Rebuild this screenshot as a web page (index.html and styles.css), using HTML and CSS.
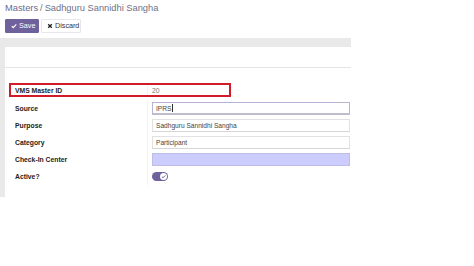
FILE: index.html
```html
<!DOCTYPE html>
<html>
<head>
<meta charset="utf-8">
<link rel="stylesheet" href="styles.css">
</head>
<body>
<div class="control">
  <div class="crumbs"><span class="crumb-link">Masters</span><span class="sep">/</span><span class="crumb-cur">Sadhguru Sannidhi Sangha</span></div>
  <div class="buttons">
    <button class="btn btn-primary"><svg class="ico" viewBox="0 0 10 10"><path d="M1.2 5.2 L3.8 7.6 L8.8 2.4" fill="none" stroke="#fff" stroke-width="2"/></svg>Save</button>
    <button class="btn btn-secondary"><svg class="ico" viewBox="0 0 10 10"><path d="M2 2 L8 8 M8 2 L2 8" fill="none" stroke="#222" stroke-width="2.2"/></svg>Discard</button>
  </div>
</div>
<div class="content">
  <div class="sheet">
    <div class="sheet-head"></div>
    <div class="form">
      <div class="row row-id">
        <div class="label">VMS Master ID</div>
        <div class="value"><span class="plain">20</span></div>
        <div class="highlight"></div>
      </div>
      <div class="row">
        <div class="label">Source</div>
        <div class="value"><div class="input focused">IPRS<span class="caret"></span></div></div>
      </div>
      <div class="row">
        <div class="label">Purpose</div>
        <div class="value"><div class="input">Sadhguru Sannidhi Sangha</div></div>
      </div>
      <div class="row">
        <div class="label">Category</div>
        <div class="value"><div class="input">Participant</div></div>
      </div>
      <div class="row">
        <div class="label">Check-In Center</div>
        <div class="value"><div class="input required"></div></div>
      </div>
      <div class="row">
        <div class="label">Active?</div>
        <div class="value"><div class="toggle"><div class="knob"><svg viewBox="0 0 10 10"><path d="M2.6 5.2 L4.4 6.9 L7.6 3.4" fill="none" stroke="#71639e" stroke-width="1.4"/></svg></div></div></div>
      </div>
    </div>
  </div>
</div>
</body>
</html>
```
FILE: styles.css
```css
* { box-sizing: border-box; }
html, body { margin: 0; padding: 0; background: #fff; }
body { font-family: "Liberation Sans", Arial, sans-serif; color: #4c4c4c; width: 474px; height: 266px; overflow: hidden; }

.control { padding: 1px 5px 0 5px; height: 38px; }
.crumbs { font-size: 9.3px; line-height: 14px; height: 17px; color: #707184; white-space: nowrap; }
.crumb-link { color: #6b6a92; }
.sep { margin: 0 2px 0 2px; color: #777; }
.crumb-cur { color: #707184; }

.buttons { display: flex; gap: 2px; margin-top: 1px; }
.btn { height: 14px; font-family: inherit; font-size: 7.2px; line-height: 12px; padding: 0 5px; border-radius: 1px; display: flex; align-items: center; gap: 2px; cursor: pointer; }
.btn-primary { width: 34px; background: #6f619c; border: 1px solid #6f619c; color: #fff; padding-left: 5px; }
.btn-secondary { width: 40px; background: #fff; border: 1px solid #e6e6ec; color: #333; padding-left: 5px; }
.ico { width: 6px; height: 6px; flex: none; }

.content { width: 351px; background: #e9e9e9; padding: 9px 0 0 5px; overflow: hidden; }
.sheet { width: 420px; height: 150px; background: #fff; }
.sheet-head { height: 21px; border-bottom: 1px solid #e4e4e4; }

.form { padding: 15px 0 0 0; display: flex; flex-direction: column; }
.row { display: flex; height: 17px; align-items: center; position: relative; }
.row-id { height: 14px; margin-bottom: 3px; }
.label { width: 143px; padding-left: 10px; font-weight: 700; font-size: 6.8px; color: #222; align-self: stretch; display: flex; align-items: center; border-right: 1px solid #f3f3f3; }
.value { padding-left: 4px; flex: 1; align-self: stretch; display: flex; align-items: center; }
.plain { font-size: 6.8px; color: #777; }
.input { width: 198px; height: 13px; border: 1px solid #e2e2e2; border-bottom-color: #d6d6d6; font-size: 6.6px; color: #444; padding-left: 3px; display: flex; align-items: center; }
.focused { border-color: #b6b4d3; border-bottom: 2px solid #bdbdcc; color: #444; }
.caret { display: inline-block; width: 1px; height: 8px; background: #333; margin-left: 0.5px; }
.required { background: #ccccfd; border-color: #bdbde8; }

.toggle { width: 16px; height: 9px; border-radius: 5px; background: #6f619c; position: relative; }
.knob { position: absolute; right: 1px; top: 1px; width: 7px; height: 7px; border-radius: 50%; background: #fff; }
.knob svg { width: 7px; height: 7px; display: block; }

.highlight { position: absolute; left: 4px; top: 0; width: 222px; height: 14px; border: 2px solid #d11a2a; pointer-events: none; }
```
